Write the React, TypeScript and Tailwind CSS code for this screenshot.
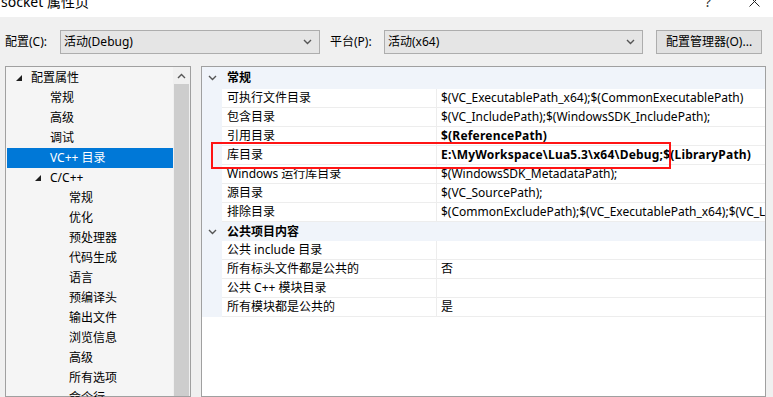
import React from "react"

const font = "font-['Noto_Sans','Noto_Sans_CJK_SC',sans-serif]"

type TreeItem = { t: string; lvl: 0 | 1 | 2; tri?: boolean; sel?: boolean }

const tree: TreeItem[] = [
  { t: "配置属性", lvl: 0, tri: true },
  { t: "常规", lvl: 1 },
  { t: "高级", lvl: 1 },
  { t: "调试", lvl: 1 },
  { t: "VC++ 目录", lvl: 1, sel: true },
  { t: "C/C++", lvl: 1, tri: true },
  { t: "常规", lvl: 2 },
  { t: "优化", lvl: 2 },
  { t: "预处理器", lvl: 2 },
  { t: "代码生成", lvl: 2 },
  { t: "语言", lvl: 2 },
  { t: "预编译头", lvl: 2 },
  { t: "输出文件", lvl: 2 },
  { t: "浏览信息", lvl: 2 },
  { t: "高级", lvl: 2 },
  { t: "所有选项", lvl: 2 },
  { t: "命令行", lvl: 2 },
]

const indent = ["pl-[9px]", "pl-[28px]", "pl-[47px]"]

type Prop = { k: string; v: string; bold?: boolean }

const general: Prop[] = [
  { k: "可执行文件目录", v: "$(VC_ExecutablePath_x64);$(CommonExecutablePath)" },
  { k: "包含目录", v: "$(VC_IncludePath);$(WindowsSDK_IncludePath);" },
  { k: "引用目录", v: "$(ReferencePath)", bold: true },
  { k: "库目录", v: "E:\\MyWorkspace\\Lua5.3\\x64\\Debug;$(LibraryPath)", bold: true },
  { k: "Windows 运行库目录", v: "$(WindowsSDK_MetadataPath);" },
  { k: "源目录", v: "$(VC_SourcePath);" },
  { k: "排除目录", v: "$(CommonExcludePath);$(VC_ExecutablePath_x64);$(VC_LibraryPath_x64)" },
]

const shared: Prop[] = [
  { k: "公共 include 目录", v: "" },
  { k: "所有标头文件都是公共的", v: "否" },
  { k: "公共 C++ 模块目录", v: "" },
  { k: "所有模块都是公共的", v: "是" },
]

function Chevron({ up = false }: { up?: boolean }) {
  return (
    <svg width="9" height="6" viewBox="0 0 9 6" className="shrink-0">
      <path
        d={up ? "M1 5 L4.5 1.5 L8 5" : "M1 1 L4.5 4.5 L8 1"}
        fill="none"
        stroke="#555"
        strokeWidth="1.4"
      />
    </svg>
  )
}

function Dropdown({ text, w }: { text: string; w: string }) {
  return (
    <div className={`${w} h-[24px] flex items-center justify-between bg-[#e5e5e5] border border-[#adadad] pl-[3px] pr-[7px]`}>
      <span>{text}</span>
      <Chevron />
    </div>
  )
}

function Category({ title, h }: { title: string; h: string }) {
  return (
    <div className={`${h} flex items-center bg-[#f0f4fa]`}>
      <div className="w-[20px] flex justify-center">
        <Chevron />
      </div>
      <span className="pl-[5px] font-bold">{title}</span>
    </div>
  )
}

function Row({ p }: { p: Prop }) {
  return (
    <div className="h-[19px] flex">
      <div className="w-[20px] bg-[#f0f4fa]" />
      <div className="w-[215px] pl-[5px] flex items-center border-b border-r border-[#ededed] whitespace-nowrap">
        {p.k}
      </div>
      <div className={`flex-1 pl-[4px] flex items-center border-b border-[#ededed] whitespace-nowrap overflow-hidden ${p.bold ? "font-bold tracking-[0.2px]" : ""}`}>
        {p.v}
      </div>
    </div>
  )
}

export default function App() {
  return (
    <div className={`${font} relative w-[773px] h-[397px] overflow-hidden bg-[#f0f0f0] text-[12px] text-black flex flex-col`}>
      {/* TITLE BAR */}
      <div className="h-[17px] bg-white overflow-hidden flex items-start shrink-0">
        <div className="-mt-[6px] pl-[1px] text-[14px] leading-[16px]">socket 属性页</div>
        <div className="ml-auto flex items-start">
          <span className="-mt-[6px] text-[14px] leading-[16px] text-[#333]">?</span>
          <svg width="11" height="11" viewBox="0 0 11 11" className="-mt-[4px] ml-[38px] mr-[13px]">
            <path d="M0.5 0.5 L10.5 10.5 M10.5 0.5 L0.5 10.5" stroke="#222" strokeWidth="1" />
          </svg>
        </div>
      </div>

      {/* CONFIG BAR */}
      <div className="mt-[13px] h-[24px] flex items-center pl-[5px] shrink-0">
        <span className="w-[55px]">配置(C):</span>
        <Dropdown text="活动(Debug)" w="w-[260px]" />
        <span className="ml-[10px] w-[54px]">平台(P):</span>
        <Dropdown text="活动(x64)" w="w-[259px]" />
        <button className="ml-[13px] w-[106px] h-[24px] bg-[#e1e1e1] border border-[#adadad]">
          配置管理器(O)...
        </button>
      </div>

      {/* PANELS */}
      <div className="mt-[12px] flex-1 flex pl-[5px] gap-[10px] min-h-0">
        {/* TREE */}
        <div className="w-[186px] border border-[#a0a0a0] bg-[#f5f5f5] flex">
          <div className="flex-1 pt-[1px] pl-[1px]">
            {tree.map((it, i) => (
              <div
                key={i}
                className={`h-[20px] flex items-center whitespace-nowrap ${indent[it.lvl]} ${it.sel ? "bg-[#0078d7] text-white" : ""}`}
              >
                <div className="w-[15px]">
                  {it.tri && (
                    <svg width="6" height="6" viewBox="0 0 6 6">
                      <polygon points="6,0 6,6 0,6" fill="#1e1e1e" />
                    </svg>
                  )}
                </div>
                <span>{it.t}</span>
              </div>
            ))}
          </div>
          <div className="w-[17px] bg-[#f0f0f0] flex flex-col">
            <div className="h-[17px] flex items-center justify-center">
              <Chevron up />
            </div>
            <div className="flex-1 mx-[1px] bg-[#cdcdcd]" />
          </div>
        </div>

        {/* PROPERTY GRID */}
        <div className="w-[565px] border border-[#a0a0a0] bg-white">
          <Category title="常规" h="h-[22px]" />
          {general.map((p) => (
            <Row key={p.k} p={p} />
          ))}
          <Category title="公共项目内容" h="h-[19px]" />
          {shared.map((p) => (
            <Row key={p.k} p={p} />
          ))}
        </div>
      </div>

      {/* ANNOTATION */}
      <div className="absolute left-[211px] top-[142px] w-[460px] h-[27px] border-2 border-[#ff1414]" />
    </div>
  )
}
